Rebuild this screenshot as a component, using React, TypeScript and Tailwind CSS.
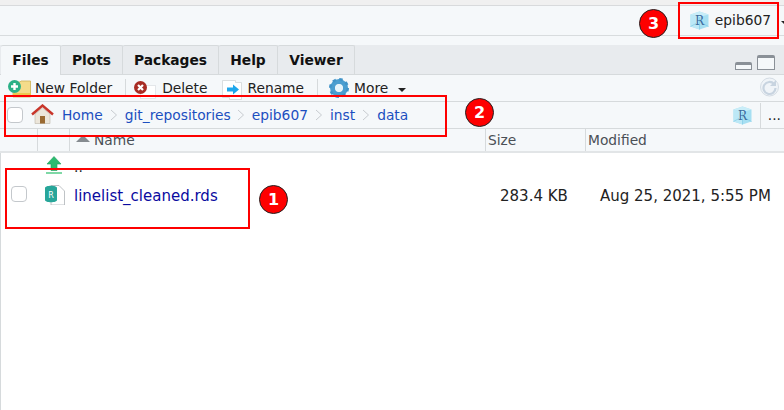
import React from "react";

const RCube = ({ size = 19 }: { size?: number }) => (
  <svg width={size} height={size} viewBox="0 0 19 19" className="shrink-0">
    <path d="M0.5 3.5 9.5 0.5 18.5 3.5V15.5L9.5 18.5 0.5 15.5Z" fill="#a6dff2" />
    <path d="M0.5 3.5 9.5 6 18.5 3.5 9.5 0.5Z" fill="#c9edf8" />
    <path d="M0.5 3.5V15.5L9.5 18.5V6Z" fill="#bce8f6" />
    <path d="M9.5 6V18.5M0.5 15.5 6 12.5M18.5 15.5 13 12.5" stroke="#82cbe6" strokeWidth="0.7" fill="none" />
    <text x="9.5" y="13.5" textAnchor="middle" fontSize="12" fontFamily="'DejaVu Serif', serif" fill="#3d6c9e">R</text>
  </svg>
);

const Badge = ({ n, className }: { n: string; className: string }) => (
  <div className={`absolute w-[29px] h-[29px] rounded-full bg-[#fe0000] border border-[#222] text-white font-bold text-[16px] flex items-center justify-center ${className}`}>
    {n}
  </div>
);

const Box = ({ className }: { className: string }) => (
  <div className={`absolute border-2 border-[#fe0000] pointer-events-none ${className}`} />
);

const Check = () => <div className="w-[16px] h-[16px] rounded-[4px] border border-[#c4c8cc] bg-white shrink-0" />;

const Chevron = ({ className = "mx-[7px]" }: { className?: string }) => (
  <svg width="8" height="12" viewBox="0 0 8 12" className={`shrink-0 ${className}`}>
    <path d="M1 1 6.5 6 1 11" fill="none" stroke="#c8ccd0" strokeWidth="1" />
  </svg>
);

const Tab = ({ label, active, w }: { label: string; active?: boolean; w: string }) => (
  <div
    className={`h-[29px] flex items-center justify-center text-[13.8px] font-bold border-r border-t border-[#d6dadc] rounded-t-[2px] text-[#111] ${w} ${
      active ? "bg-[#f5f8fa] h-[30px] -mb-px relative" : "bg-[#e8ebee]"
    }`}
  >
    {label}
  </div>
);

const Sep = () => <div className="w-px h-[18px] bg-[#d6dadc]" />;

export default function App() {
  return (
    <div
      className="relative w-[784px] h-[410px] overflow-hidden bg-white text-[13.8px] text-[#333]"
      style={{ fontFamily: "'DejaVu Sans', sans-serif" }}
    >
      <div className="h-[6px] bg-[#f0f0f0] border-b border-[#d8dadc]" />
      <div className="h-[30px] bg-[#f5f8fa] border-b border-[#d8dcde] flex items-center justify-end pr-[13px]">
        <RCube size={19} />
        <span className="text-[#222] ml-[6px]">epib607</span>
      </div>
      <div className="h-[9px] bg-[#f5f8fa]" />
      <div className="h-[30px] bg-[#e8ebee] border-b border-[#d6dadc] flex items-end pl-px justify-between">
        <div className="flex">
          <Tab label="Files" active w="w-[60px]" />
          <Tab label="Plots" w="w-[62px]" />
          <Tab label="Packages" w="w-[96px]" />
          <Tab label="Help" w="w-[59px]" />
          <Tab label="Viewer" w="w-[77px]" />
        </div>
        <div className="flex items-end gap-[5px] pr-[9px] pb-[4px]">
          <div className="w-[17px] h-[8px] rounded-t-[2px] border border-[#8a9097] bg-[#f5f8fa] border-t-[3px]" />
          <div className="w-[18px] h-[15px] rounded-t-[2px] border border-[#8a9097] bg-[#f5f8fa] border-t-[3px]" />
        </div>
      </div>
      <div className="h-[27px] bg-[#f5f8fa] border-b border-[#d6dadc] flex items-center pl-[8px] text-[#222]">
        <svg width="24" height="18" viewBox="0 0 24 18" className="shrink-0 mt-[2px]">
          <path d="M5 4V2h7l1-1h9.500V17H5Z" fill="#f4dc8a" stroke="#cdb155" strokeWidth="0.8" />
          <rect x="5" y="13" width="18" height="4" fill="#ecc94f" />
          <circle cx="6.500" cy="6.500" r="6.500" fill="#2bb187" />
          <path d="M6.500 3v7M3 6.500h7" stroke="#fff" strokeWidth="2.400" />
        </svg>
        <span className="ml-[3px]">New Folder</span>
        <div className="ml-[13px]"><Sep /></div>
        <svg width="22" height="18" viewBox="0 0 22 18" className="ml-[8px] shrink-0 mt-[4px]">
          <rect x="6.500" y="4.500" width="15" height="13" fill="#fff" stroke="#dfe2e5" strokeWidth="0.8" />
          <circle cx="6.500" cy="6.500" r="6.500" fill="#a82c24" />
          <path d="M4 4 9 9M9 4 4 9" stroke="#fff" strokeWidth="2.200" />
        </svg>
        <span className="ml-[6px]">Delete</span>
        <svg width="21" height="20" viewBox="0 0 21 20" className="ml-[15px] shrink-0 mt-[3px]">
          <path d="M0.500 0.500h13v2h6v17h-12v-2h-7Z" fill="#fff" stroke="#d2d5d8" strokeWidth="0.8" />
          <path d="M5 7.500h6V4.500l6 5-6 5v-3H5Z" fill="#1ea7ec" />
        </svg>
        <span className="ml-[4px]">Rename</span>
        <div className="ml-[13px]"><Sep /></div>
        <svg width="20" height="20" viewBox="0 0 20 20" className="ml-[11px] shrink-0 -mt-[1px]">
          <circle cx="10" cy="10" r="6.500" fill="none" stroke="#4a9ed0" strokeWidth="5" />
          <circle cx="10" cy="10" r="8.700" fill="none" stroke="#3f93c8" strokeWidth="2.600" strokeDasharray="3.400 3.430" />
          <circle cx="10" cy="10" r="3.400" fill="#e4f4fb" />
        </svg>
        <span className="ml-[5px]">More</span>
        <div className="ml-[10px] mt-[3px] w-0 h-0 border-l-[4px] border-r-[4px] border-t-[4px] border-l-transparent border-r-transparent border-t-[#222]" />
        <div className="ml-auto mr-[4px] -mt-[2px]">
          <svg width="20" height="20" viewBox="0 0 20 20">
            <circle cx="9.500" cy="10" r="9" fill="#f0f4f8" stroke="#d4dce4" />
            <path d="M14 7A6 6 0 1 0 15.500 11" fill="none" stroke="#c8d4e0" strokeWidth="2.200" />
            <path d="M16 3v6h-6Z" fill="#c8d4e0" />
          </svg>
        </div>
      </div>
      <div className="h-[27px] bg-[#f5f8fa] border-b border-[#d6dadc] flex items-center pl-[7px] text-[#1c4fc0]">
        <Check />
        <svg width="23" height="20" viewBox="0 0 23 20" className="ml-[8px] shrink-0 -mt-[2px]">
          <path d="M4 10 11.500 4 19 10V19.500H4Z" fill="#ece6da" stroke="#bcb5a8" strokeWidth="0.6" />
          <rect x="9" y="12" width="5" height="7.500" fill="#9a6a32" />
          <path d="M1 10.500 11.500 1.500 22 10.500" fill="none" stroke="#c8352a" strokeWidth="2.400" />
        </svg>
        <span className="ml-[8px]">Home</span>
        <Chevron />
        <span>git_repositories</span>
        <Chevron className="ml-[6px] mr-[7px]" />
        <span>epib607</span>
        <Chevron />
        <span>inst</span>
        <Chevron />
        <span>data</span>
        <div className="ml-auto flex items-center">
          <RCube size={19} />
          <div className="w-px h-[25px] bg-[#d6dadc] ml-[8px]" />
          <span className="text-[#222] ml-[7px] mr-[3px]">...</span>
        </div>
      </div>
      <div className="h-[24px] bg-[#f5f8fa] border-b-2 border-[#e2e5e7] flex text-[#4a5056]">
        <div className="w-[38px] border-r border-[#d6dadc]" />
        <div className="w-[32px] border-r border-[#d6dadc]" />
        <div className="w-[416px] border-r border-[#d6dadc] flex items-center pl-[6px]">
          <div className="w-0 h-0 border-l-[7px] border-r-[7px] border-b-[7px] border-l-transparent border-r-transparent border-b-[#858b90] mr-[4px] -mt-[3px]" />
          <span>Name</span>
        </div>
        <div className="w-[100px] border-r border-[#d6dadc] flex items-center pl-[2px]"><span>Size</span></div>
        <div className="flex items-center pl-[2px]"><span>Modified</span></div>
      </div>
      <div className="border-l border-[#d6dadc] h-[258px]">
        <div className="h-[21px] relative flex pl-[45px] pt-[3px]">
          <svg width="16" height="18" viewBox="0 0 16 18" className="shrink-0">
            <path d="M8 0.500 15 8H11V14.500H5V8H1Z" fill="#2dbb70" stroke="#1e9e5c" strokeWidth="0.6" />
            <rect x="0" y="16" width="16" height="2" fill="#7fd8a6" />
          </svg>
          <span className="text-[#222] ml-[12px] mt-[1px]">..</span>
        </div>
        <div className="flex items-start pt-[11px] text-[#222] bg-white h-[40px] relative text-[15px]">
          <div className="ml-[10px] mt-[1px]"><Check /></div>
          <svg width="20" height="20" viewBox="0 0 20 20" className="ml-[18px] shrink-0">
            <path d="M6 0.500h8l5.500 5.500v14H6Z" fill="#fff" stroke="#aeb4b8" strokeWidth="0.8" />
            <path d="M0 3c0-3 12-3 12 0v12c0 3-12 3-12 0Z" fill="#28a69a" />
            <text x="6" y="13" textAnchor="middle" fontSize="8" fill="#fff" fontFamily="'DejaVu Sans', sans-serif">R</text>
          </svg>
          <span className="ml-[9px] text-[#0a0aa0] w-[426px]">linelist_cleaned.rds</span>
          <span className="w-[100px]">283.4 KB</span>
          <span>Aug 25, 2021, 5:55 PM</span>
        </div>
      </div>
      <Box className="left-[5px] top-[168px] w-[245px] h-[61px]" />
      <Box className="left-[4px] top-[95px] w-[443px] h-[42px]" />
      <Box className="left-[678px] top-[2px] w-[101px] h-[37px]" />
      <Badge n="1" className="left-[259px] top-[185px]" />
      <Badge n="2" className="left-[465px] top-[98px]" />
      <Badge n="3" className="left-[639px] top-[9px]" />
      <div className="absolute left-[781px] top-[21px] w-0 h-0 border-l-[3px] border-r-[3px] border-t-[3px] border-l-transparent border-r-transparent border-t-[#222]" />
    </div>
  );
}
